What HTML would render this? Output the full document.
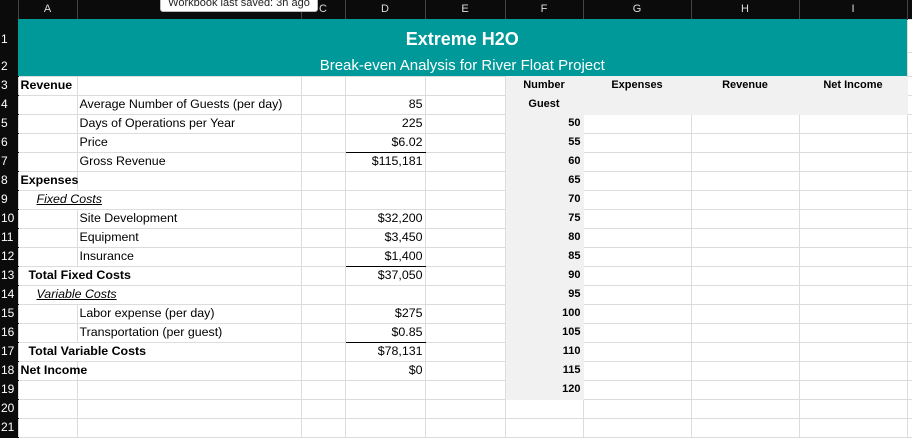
<!DOCTYPE html>
<html><head><meta charset="utf-8"><style>
*{margin:0;padding:0;box-sizing:border-box}
body{width:912px;height:441px;overflow:hidden;background:#fff;font-family:"Liberation Sans",sans-serif;font-size:12.4px;color:#000;position:relative}
table{border-collapse:collapse;table-layout:fixed;position:absolute;left:0;top:0;width:912px}
td{border:1px solid #dcdcdc;height:19px;white-space:nowrap;overflow:visible;padding:0 2px;line-height:17px}
td.rh{background:#0b0b0b;color:#fff;border:none;border-bottom:1px solid #0b0b0b;padding:0 0 0 1px;font-size:12px}
tr.ch td{background:#0b0b0b;color:#ddd;text-align:center;border:none;border-right:1px solid #444;font-size:11px;height:19px}
.teal td.t{background:#009999;border:none;color:#fff;text-align:center}
.r{text-align:right}
.b{font-weight:bold}
.g{background:#f1f1f1;border-color:#f1f1f1}
.f{background:#f1f1f1;border-color:#f1f1f1;text-align:right;font-weight:bold;font-size:11px}
.hd{font-weight:bold;font-size:11px;text-align:center}
.ul{border-bottom:1px solid #000}
.tip{position:absolute;left:160px;top:-4px;width:158px;height:16px;background:#fff;border:1px solid #bbb;border-radius:3px;font-size:11px;text-align:center;line-height:12px;color:#222}
</style></head><body>
<table>
<colgroup><col style="width:18px"><col style="width:59px"><col style="width:224px"><col style="width:44px"><col style="width:80px"><col style="width:80px"><col style="width:78px"><col style="width:108px"><col style="width:108px"><col style="width:108px"><col style="width:5px"></colgroup>
<tr class="ch"><td></td><td>A</td><td>B</td><td>C</td><td>D</td><td>E</td><td>F</td><td>G</td><td>H</td><td>I</td><td></td></tr>
<tr class="teal" style="height:33px"><td class="rh" style="height:33px;padding-top:8px">1</td><td class="t" colspan="9" style="font-size:18px;font-weight:bold;height:33px;padding-top:7px">Extreme H2O</td><td></td></tr>
<tr class="teal" style="height:24px"><td class="rh" style="height:24px;padding-top:4px">2</td><td class="t" colspan="9" style="font-size:15px;height:24px;padding-top:3px">Break-even Analysis for River Float Project</td><td></td></tr>
<tr><td class="rh">3</td><td class="b">Revenue</td><td></td><td></td><td></td><td></td><td class="hd g">Number</td><td class="hd g">Expenses</td><td class="hd g">Revenue</td><td class="hd g">Net Income</td><td></td></tr>
<tr><td class="rh">4</td><td></td><td>Average Number of Guests (per day)</td><td></td><td class="r">85</td><td></td><td class="hd g">Guest</td><td class="g"></td><td class="g"></td><td class="g"></td><td></td></tr>
<tr><td class="rh">5</td><td></td><td>Days of Operations per Year</td><td></td><td class="r">225</td><td></td><td class="f">50</td><td></td><td></td><td></td><td></td></tr>
<tr><td class="rh">6</td><td></td><td>Price</td><td></td><td class="r ul">$6.02</td><td></td><td class="f">55</td><td></td><td></td><td></td><td></td></tr>
<tr><td class="rh">7</td><td></td><td>Gross Revenue</td><td></td><td class="r">$115,181</td><td></td><td class="f">60</td><td></td><td></td><td></td><td></td></tr>
<tr><td class="rh">8</td><td class="b">Expenses</td><td></td><td></td><td></td><td></td><td class="f">65</td><td></td><td></td><td></td><td></td></tr>
<tr><td class="rh">9</td><td colspan="2" style="padding-left:18px"><i><u>Fixed Costs</u></i></td><td></td><td></td><td></td><td class="f">70</td><td></td><td></td><td></td><td></td></tr>
<tr><td class="rh">10</td><td></td><td>Site Development</td><td></td><td class="r">$32,200</td><td></td><td class="f">75</td><td></td><td></td><td></td><td></td></tr>
<tr><td class="rh">11</td><td></td><td>Equipment</td><td></td><td class="r">$3,450</td><td></td><td class="f">80</td><td></td><td></td><td></td><td></td></tr>
<tr><td class="rh">12</td><td></td><td>Insurance</td><td></td><td class="r ul">$1,400</td><td></td><td class="f">85</td><td></td><td></td><td></td><td></td></tr>
<tr><td class="rh">13</td><td colspan="2" class="b" style="padding-left:10px">Total Fixed Costs</td><td></td><td class="r">$37,050</td><td></td><td class="f">90</td><td></td><td></td><td></td><td></td></tr>
<tr><td class="rh">14</td><td colspan="2" style="padding-left:18px"><i><u>Variable Costs</u></i></td><td></td><td></td><td></td><td class="f">95</td><td></td><td></td><td></td><td></td></tr>
<tr><td class="rh">15</td><td></td><td>Labor expense (per day)</td><td></td><td class="r">$275</td><td></td><td class="f">100</td><td></td><td></td><td></td><td></td></tr>
<tr><td class="rh">16</td><td></td><td>Transportation (per guest)</td><td></td><td class="r ul">$0.85</td><td></td><td class="f">105</td><td></td><td></td><td></td><td></td></tr>
<tr><td class="rh">17</td><td colspan="2" class="b" style="padding-left:10px">Total Variable Costs</td><td></td><td class="r">$78,131</td><td></td><td class="f">110</td><td></td><td></td><td></td><td></td></tr>
<tr><td class="rh">18</td><td class="b">Net Income</td><td></td><td></td><td class="r">$0</td><td></td><td class="f">115</td><td></td><td></td><td></td><td></td></tr>
<tr><td class="rh">19</td><td></td><td></td><td></td><td></td><td></td><td class="f">120</td><td></td><td></td><td></td><td></td></tr>
<tr><td class="rh">20</td><td></td><td></td><td></td><td></td><td></td><td></td><td></td><td></td><td></td><td></td></tr>
<tr><td class="rh">21</td><td></td><td></td><td></td><td></td><td></td><td></td><td></td><td></td><td></td><td></td></tr>
</table>
<div class="tip">Workbook last saved: 3h ago</div>
</body></html>
